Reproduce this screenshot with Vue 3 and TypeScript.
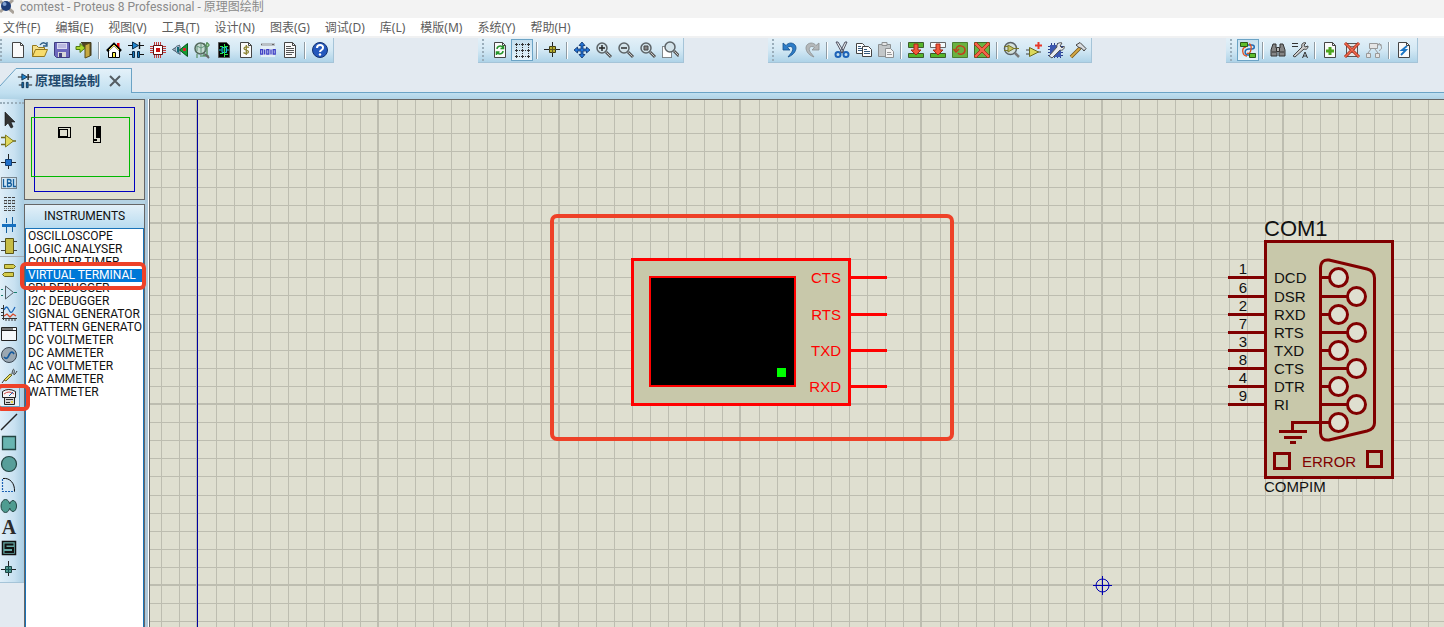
<script setup lang="ts">
import { ref } from 'vue'

interface Tool {
  icon: string
  label: string
}

const menus: string[] = [
  '文件(F)', '编辑(E)', '视图(V)', '工具(T)', '设计(N)', '图表(G)',
  '调试(D)', '库(L)', '模版(M)', '系统(Y)', '帮助(H)',
]

const page = '<path d="M3.500 1.500h8l3 3v12h-11z" fill="#fafafa" stroke="#454545"/><path d="M11.500 1.500v3h3" fill="none" stroke="#454545"/>'
const lens = '<circle cx="7" cy="7" r="5" fill="#d3e3ea" stroke="#5d6468" stroke-width="1.500"/><path d="M11 11l5 5" stroke="#555" stroke-width="3"/><path d="M11.500 11.500l4 4" stroke="#c8c8c8"/>'
const board = '<path d="M1.500 1.500h15v5h-15zM1.500 12.500h15v4h-15z" fill="#55b52b" stroke="#3c5c2c"/>'
const downArrow = '<path d="M7 3h4v6h3l-5 5-5-5h3z" fill="#f2593c" stroke="#a82814"/>'

const icons: Record<string, string> = {
  new: page,
  open: '<path d="M1.500 15.500v-11h4l2 2h6v3" fill="#f4e08a" stroke="#94771c"/><path d="M1.500 15.500l3-7h12l-3 7z" fill="#f7dc6c" stroke="#94771c"/><path d="M9 4c2-3 5-3 7 0m0-3v4h-4" fill="none" stroke="#2c5c84" stroke-width="1.300"/>',
  save: '<path d="M1.500 1.500h15v15h-13l-2-2z" fill="#6d69bd" stroke="#403d80"/><path d="M4 2h10v6h-10z" fill="#dadaf0"/><path d="M5 4h8M5 6h8" stroke="#9a98cf"/><path d="M5 11h8v5h-8z" fill="#d8d8d8"/><path d="M6 12h3v4h-3z" fill="#434080"/>',
  exit: '<path d="M6 1.500h10v13h-3" fill="#4e4424" stroke="#3f381f"/><path d="M10 4l5-2v13l-5 2z" fill="#c7a940" stroke="#594c1c"/><path d="M1 5.500h4v-3l5 4.500-5 4.500v-3h-4z" fill="#a9d82c" stroke="#4f7a12"/>',
  home: '<path d="M12 2h2.500v6h-2.500z" fill="#e00"/><path d="M4.500 9.500L9 5l5.500 4.500v7h-11z" fill="#fff"/><path d="M3.500 9v7.500h11V9" stroke="#000"/><path d="M2 10l7-7 7 7" fill="none" stroke="#000" stroke-width="2.500"/><path d="M4 9l5-5 5 5" fill="none" stroke="#fff04a"/><path d="M7.500 11.500h3v5h-3z" fill="#fff04a" stroke="#000"/>',
  schematic: '<path d="M1 4.500h5M12 4.500h5M2 13.500h4M13 13.500h4" stroke="#111"/><path d="M5.500 1v7l6-3.500z" fill="#1f86d0" stroke="#0c2c48"/><path d="M12.500 1v7" stroke="#111" stroke-width="1.400"/><path d="M5.500 10.500h2v6h-2zM10.500 10.500h2v6h-2z" fill="#1677b8" stroke="#0c2c48"/>',
  chip: '<path d="M5.500 1v16M7.500 1v16M9.500 1v16M11.500 1v16M1 5.500h16M1 7.500h16M1 9.500h16M1 11.500h16" stroke="#c23a3a"/><path d="M4.500 4.500h9v9h-9z" fill="#fff" stroke="#5c1010"/><path d="M7 7h4v4h-4z" fill="#c11"/>',
  view3d: '<path d="M1.500 8.500L9 4M1.500 8.500l8 5" fill="none" stroke="#456"/><path d="M4 8c0-3 4-4 5-3v8c-3-1-5-2-5-5z" fill="#b8cfe0" stroke="#567"/><path d="M6 6h2v6l-2-1z" fill="#146a78"/><path d="M16.500 2.500v13l-8-6.500z" fill="#159b32" stroke="#08541a"/><path d="M12 7h3v3h-3z" fill="#d8262c"/>',
  gerber: '<path d="M11 2v13M14 1v14M7 15h9" stroke="#428044" stroke-width="1.200"/><circle cx="7.500" cy="7.500" r="5.500" fill="#c7dbd3" stroke="#53695d" stroke-width="1.500"/><path d="M4 10V5l4 2 4-2v5M8 3v9" fill="none" stroke="#62947b"/><path d="M12 13l4 4" stroke="#666" stroke-width="2"/><circle cx="14.500" cy="4" r="1.600" fill="#9dd09e" stroke="#428044"/><path d="M4 13v4" stroke="#428044"/>',
  explorer: '<path d="M3.500 1.500h8l3 3v12h-11z" fill="#000" stroke="#555"/><path d="M5 5.500h3M5 12.500h3M9.500 3v3M9.500 12v4M10 5.500h3M10 13.500h3" stroke="#2ee04a"/><path d="M4 9h2.500M12 9h2" stroke="#17c8d8"/><path d="M7 6.500h4.500v5h-4.500z" fill="#083c3c" stroke="#17c8d8"/><path d="M9.500 6v6" stroke="#2ee04a"/>',
  bill: page + '<path d="M12 6.500c-1-1-5-1-5 1s4.500 1.200 4.500 3.200-4 2-5 .800M9.300 4v10" fill="none" stroke="#8c8433" stroke-width="1.300"/>',
  binary: '<path d="M2 2h14v14h-14z" fill="#e4eef6"/><path d="M2 2h14v3h-14z" fill="#b9c0c6"/><path d="M2 3.500h1M13 3.500h2" stroke="#666"/><path d="M1.700 8.700h2v4.500h-2zM5.700 13.500v-5M7.800 8.700h2v4.500h-2zM12 13.500v-5M14.200 8.700h2v4.500h-2z" fill="none" stroke="#3c3cc4" stroke-width="1.300"/>',
  notes: page + '<path d="M5 5.500h5M5 7.500h8M5 9.500h8M5 11.500h8M5 13.500h6" stroke="#555"/>',
  help: '<circle cx="9" cy="9" r="7.500" fill="#2459bd" stroke="#12316f"/><path d="M6 7c0-4 6.500-4 6 0 0 2-3 2-3 4" fill="none" stroke="#fff" stroke-width="2"/><circle cx="9" cy="13.500" r="1.200" fill="#fff"/>',
  refresh: page + '<path d="M6 8c0-3 4-4 6-1.500m.5-2v3h-3M12 10c0 3-4 4-6 1.500m-.5 2.500v-3h3" fill="none" stroke="#25952b" stroke-width="1.500"/>',
  grid: '<path d="M2 3.500h15M2 9.500h15M2 15.500h15M3.500 2v15M9.500 2v15M15.500 2v15" stroke="#333" stroke-dasharray="1 1"/><path d="M2 3.500h3M8 3.500h3M14 3.500h3M2 9.500h3M8 9.500h3M14 9.500h3M2 15.500h3M8 15.500h3M14 15.500h3" stroke="#333"/>',
  origin: '<path d="M1 8.500h16M9.500 1v15" stroke="#222"/><path d="M6.500 5.500h6v6h-6z" fill="#b9b030" stroke="#3f3c15"/><path d="M6 8.500h7M9.500 5v7" stroke="#5e5a20"/>',
  pan: '<path d="M9 1l3 3.500h-2v3.500h3.500v-2l3.500 3-3.500 3v-2h-3.500v3.500h2l-3 3.500-3-3.500h2v-3.500H4.500v2L1 9l3.500-3v2H8V4.500H6z" fill="#2476d9" stroke="#0c2e66" stroke-width=".8"/>',
  zoomIn: lens + '<path d="M4 7h6M7 4v6" stroke="#222" stroke-width="1.400"/>',
  zoomOut: lens + '<path d="M4 7h6" stroke="#222" stroke-width="1.400"/>',
  zoomAll: lens + '<path d="M5 5h4v4h-4z" fill="#888" stroke="#444"/>',
  zoomArea: '<path d="M1.500 5.500h9v11h-9z" fill="#fff" stroke="#222" stroke-dasharray="1 1"/><g transform="translate(2 -1)">' + lens + '</g>',
  undo: '<path d="M2 2v7h7L6.500 6.500c4-3 7 1 4 5L7 16c9-3 11-13 3-14-2 0-4 1-5 2.500z" fill="#2e7dc8" stroke="#17518c" stroke-width=".8"/>',
  redo: '<path d="M16 2v7H9l2.500-2.500c-4-3-7 1-4 5L11 16C2 13 0 3 8 2c2 0 4 1 5 2.500z" fill="#b4b8ba" stroke="#8c9092" stroke-width=".8"/>',
  cut: '<path d="M3 1l2 0 6 10-2 1zM14 1l-2 0-5 10 2 1z" fill="#e8eef0" stroke="#445" stroke-width=".9"/><circle cx="5" cy="13.500" r="2.500" fill="none" stroke="#1e63b8" stroke-width="2"/><circle cx="13" cy="13.500" r="2.500" fill="none" stroke="#1e63b8" stroke-width="2"/>',
  copy: '<path d="M1.500 2.500h6l2 2v8h-8z" fill="#fff" stroke="#444"/><path d="M7.500 5.500h6l3 3v7h-9z" fill="#fff" stroke="#444"/><path d="M3 5.500h3M3 7.500h4M3 9.500h4M9 8.500h3M9 10.500h6M9 12.500h6" stroke="#35597c"/>',
  paste: '<path d="M1.500 3.500h12v12h-12z" fill="#c3c7c9" stroke="#8c9092"/><path d="M5 1.500h5v3h-5z" fill="#e4e4e4" stroke="#8c9092"/><path d="M8.500 7.500h5l3 3v6h-8z" fill="#f5f5f5" stroke="#8c9092"/><path d="M10 11.500h4M10 13.500h5" stroke="#999"/>',
  blockCopy: board + downArrow,
  blockMove: '<path d="M1.500 1.500h15v5h-15z" fill="#f4fafc" stroke="#666"/><path d="M1.500 12.500h15v4h-15z" fill="#55b52b" stroke="#3c5c2c"/>' + downArrow,
  blockRotate: '<path d="M1.500 1.500h15v15h-15z" fill="#6ab241" stroke="#4b7d31"/><path d="M5 9c0-6 9-5 9 0s-6 5-7 3M2.500 8l2.500 3 3-3" fill="none" stroke="#c63a1c" stroke-width="1.500"/>',
  blockDelete: '<path d="M1.500 1.500h15v15h-15z" fill="#6ab241" stroke="#3f6a2b"/><path d="M3 1l6 6 6-6 2 2-6 6 6 6-2 2-6-6-6 6-2-2 6-6-6-6z" fill="#f2654a" stroke="#aa2c16" stroke-width=".9"/>',
  pick: '<circle cx="7.500" cy="7.500" r="6" fill="#d3e0dd" stroke="#5a6266" stroke-width="1.500"/><path d="M5 4v7l6-3.500z" fill="#c9c65c" stroke="#77752b"/><path d="M1 5.500h4M1 9.500h4M11 7.500h5" stroke="#77752b"/><path d="M12 12l4 4" stroke="#777" stroke-width="2.500"/>',
  make: '<path d="M1 9h4M1 13h4M13 11h3" stroke="#444"/><path d="M4.500 6.500v9l9-4.500z" fill="#dbd85a" stroke="#6b691d"/><path d="M13.500 1v7M10 4.500h7" stroke="#e8392a" stroke-width="2"/>',
  packaging: '<path d="M4.500 2v15M7.500 2v15M10.500 2v15M13.500 2v15M1 5.500h15M1 8.500h15M1 11.500h15M1 14.500h15" stroke="#2b3f8b"/><path d="M3 4h11v12h-11z" fill="#3c58b0"/><path d="M2 15l8-9c-1-3 2-5 5-4l-2 3 2 2 2-2c1 3-2 5-4 4l-8 8z" fill="#e8ecee" stroke="#555"/>',
  hammer: '<path d="M2 16l9-9" stroke="#76571a" stroke-width="3.500"/><path d="M2 16l9-9" stroke="#d6aa47" stroke-width="1.800"/><path d="M7 4l4-2.500 6 6-2 2.500-2-2.500-3-1z" fill="#d9dde0" stroke="#444"/>',
  wire: '<path d="M9 4h4c3 0 3 4 0 4h-3c-5 0-5 6-1 6h2" fill="none" stroke="#1f69b5" stroke-width="1.500"/><path d="M7 6c-5 0-4 9 1 9M10 3c4 0 2 12-2 9" fill="none" stroke="#e04a1c" stroke-width="1.300"/><path d="M1.500 1.500h7v4h-7zM10.500 12.500h6v4h-6z" fill="#5fbd2d" stroke="#2b5c17"/>',
  search: '<path d="M4 3h3v4l1 1v7h-6v-6zM11 3h3l2 6v6h-6v-7l1-1z" fill="#858585" stroke="#333"/><path d="M7.500 6.500h3v4h-3zM3 11h4M11 11h4" fill="#b9b9b9" stroke="#333"/>',
  property: '<path d="M1 2.500h6M1 5.500h6" stroke="#333"/><path d="M2 15l9-9c-1-3 1-5 4-4l-2 2 1 2 3-1c0 3-2 4-4 3l-9 8z" fill="#ccc" stroke="#444"/><path d="M11.500 17l2.500-6 2.500 6M12 15h4" fill="none" stroke="#333"/>',
  addSheet: page + '<path d="M9 6v8M5 10h8" stroke="#4ea51f" stroke-width="3"/>',
  removeSheet: '<path d="M3.500 2.500h11v13h-11z" fill="#e4e4e4" stroke="#555"/><path d="M6 5.500h6M6 8.500h6M6 11.500h6" stroke="#777"/><path d="M2 2l14 14M16 2L2 16" stroke="#a52c18" stroke-width="3"/><path d="M2 2l14 14M16 2L2 16" stroke="#f0694f" stroke-width="1.500"/>',
  parent: '<path d="M4.500 2.500h8v5h-8zM1.500 12.500h4v4h-4zM10.500 12.500h4v4h-4z" fill="#e5e5e5" stroke="#999"/><path d="M6 8l-3 4M10 8l3 4M13 3.500c4 0 5 5 1 6m3-5l-3-2-1 2" fill="none" stroke="#999"/>',
  erc: page + '<path d="M12 5l-5 4h4l-5 5" fill="none" stroke="#1a75c4" stroke-width="1.800"/>',
  select: '<path d="M5 1v14l3-3 3 5 2-1-2-5h4z" fill="#333" stroke="#111" stroke-width=".6"/>',
  component: '<path d="M1 5.500h5M1 12.500h5M12 9h4" stroke="#6b691d" stroke-width="1.300"/><path d="M5.500 3l8 6-8 6z" fill="#e0d95d" stroke="#837e23"/>',
  junction: '<path d="M1 9.500h15M8.500 1v15" stroke="#222"/><path d="M5.500 6.500h6v6h-6z" fill="#1f6fca" stroke="#123f75"/>',
  label: '<path d="M1.500 3.500h15v11h-15z" fill="none" stroke="#222" stroke-dasharray="1 1"/><path d="M3.500 5v7.500h2.500M7.500 5.500h1.500q2 0 2 1.700T9.500 9H8q3.500 0 3.500 1.700t-2 1.800H7.500zM13.500 5v7.500h2.500" fill="none" stroke="#155f9d" stroke-width="1.300"/>',
  script: '<path d="M4 2.500h11M4 5.500h11M4 8.500h11M4 11.500h11M4 15.500h11" stroke="#444" stroke-dasharray="3 1"/><path d="M4 7h11M4 13.500h11" stroke="#777" stroke-dasharray="1 1"/>',
  bus: '<path d="M6.500 8v9M12.500 1v15M6.500 2v5" stroke="#155f9d"/><path d="M2 9.500h14" stroke="#1770c0" stroke-width="3"/>',
  subcircuit: '<path d="M1 4.500h16M1 13.500h16" stroke="#444"/><path d="M5.500 1.500h8v15h-8z" fill="#c6bc45" stroke="#5a5518"/>',
  terminal: '<path d="M4.500 2.500h9l2 2-2 2h-9zM13.500 10.500h-9l-2 2 2 2h9z" fill="#d4cb4b" stroke="#6b661b"/>',
  pin: '<path d="M1 6.500h2M1 12.500h2M14 9.500h3" stroke="#178070"/><path d="M5.500 3l8 6.500-8 6.500z" fill="#cfe3f4" stroke="#566068"/>',
  graph: '<path d="M3.500 1v15M2 14.500h15M1 4.500h2M1 8.500h2M1 11.500h2M6 14v3M9 14v3M12 14v3M15 14v3" stroke="#333"/><path d="M4 6c2-4 3-4 5 0s3 3 6-3" fill="none" stroke="#2068b8" stroke-width="1.300"/><path d="M4 12l3-2 3 3 3-3 3 2" fill="none" stroke="#d4472a" stroke-width="1.300"/>',
  popup: '<path d="M1.500 2.500h15v13h-15z" fill="#f6f9fb" stroke="#222"/><path d="M2 3h11v2h-11z" fill="#777"/><path d="M2 5.500h14" stroke="#222"/>',
  generator: '<circle cx="9" cy="9" r="7.500" fill="#9aa7b2" stroke="#3a4651"/><path d="M4 11c3 3 4 0 5-2s3-5 5-1" fill="none" stroke="#165a9c" stroke-width="1.700"/>',
  probe: '<path d="M2 16l3-4" stroke="#333"/><path d="M4 13l6-6 2 1-6 6z" fill="#e2d964" stroke="#67621c"/><path d="M12 7c1-8 3-4 2-1s1 2 3-2" fill="none" stroke="#333"/>',
  instrument: '<path d="M2.500 9.500v-6q6-4 13 0v6z" fill="#f5f5f5" stroke="#222"/><path d="M4 6q5-4 10 0" fill="none" stroke="#c44"/><path d="M9 8l4-4" stroke="#1464b4"/><path d="M4.500 9.500h10v7h-10z" fill="#d7d7d7" stroke="#222"/><path d="M6 11.500h7M6 14.500h4" stroke="#333"/><path d="M11 13h2v2h-2z" fill="#e6d945"/>',
  line: '<path d="M1 17L17 1" stroke="#222" stroke-width="1.400"/>',
  box: '<path d="M2.500 2.500h13v13h-13z" fill="#68b5b1" stroke="#234442" stroke-width="1.300"/>',
  circle: '<circle cx="9" cy="9" r="7.500" fill="#579e9a" stroke="#234442" stroke-width="1.200"/>',
  arc: '<path d="M2.500 3v12.500h12" fill="none" stroke="#1d62b5" stroke-width="1.200" stroke-dasharray="2 1"/><path d="M3 2.500c7-1 12 5 11.500 13" fill="none" stroke="#111"/>',
  path: '<ellipse cx="5.500" cy="9" rx="4.500" ry="6.500" fill="#4f9c91" stroke="#234442"/><ellipse cx="13" cy="9" rx="3.500" ry="5.500" fill="#4f9c91" stroke="#234442"/><path d="M8 7h3v4h-3z" fill="#4f9c91"/>',
  symbol: '<path d="M2.500 2.500h13v13h-13z" fill="#65aaa6" stroke="#111" stroke-width="1.500"/><path d="M13.500 5.500h-8v3.500h7.500v4h-8.500" fill="none" stroke="#111" stroke-width="2"/>',
  marker: '<path d="M1 9.500h15M8.500 1v15" stroke="#222"/><path d="M5.500 6.500h6v6h-6z" fill="#4f9c91" stroke="#1f4745"/><path d="M8.500 6v7M5 9.500h7" stroke="#164f52"/>',
}

const t = (icon: string, label: string): Tool => ({ icon, label })

const toolbars: { name: string; groups: Tool[][] }[] = [
  {
    name: 'file',
    groups: [
      [t('new', '新建'), t('open', '打开'), t('save', '保存'), t('exit', '关闭')],
      [
        t('home', '主页'), t('schematic', '原理图'), t('chip', 'PCB'), t('view3d', '3D'), t('gerber', 'Gerber'),
        t('explorer', '设计浏览器'), t('bill', '材料清单'), t('binary', '源代码'), t('notes', '工程备注'),
      ],
      [t('help', '帮助')],
    ],
  },
  {
    name: 'view',
    groups: [
      [t('refresh', '刷新'), t('grid', '网格')],
      [t('origin', '原点')],
      [t('pan', '平移'), t('zoomIn', '放大'), t('zoomOut', '缩小'), t('zoomAll', '全部'), t('zoomArea', '区域')],
    ],
  },
  {
    name: 'edit',
    groups: [
      [t('undo', '撤销'), t('redo', '重做')],
      [t('cut', '剪切'), t('copy', '复制'), t('paste', '粘贴')],
      [t('blockCopy', '块复制'), t('blockMove', '块移动'), t('blockRotate', '块旋转'), t('blockDelete', '块删除')],
      [t('pick', '选取元件'), t('make', '制作元件'), t('packaging', '封装'), t('hammer', '分解')],
    ],
  },
  {
    name: 'design',
    groups: [
      [t('wire', '自动布线')],
      [t('search', '查找'), t('property', '属性分配')],
      [t('addSheet', '新建图纸'), t('removeSheet', '删除图纸'), t('parent', '父图纸')],
      [t('erc', '电气规则检查')],
    ],
  },
]

const pressed = new Set(['grid', 'wire', 'instrument'])

const modes: Tool[][] = [
  [
    t('select', '选择'), t('component', '元件'), t('junction', '节点'), t('label', '标签'),
    t('script', '脚本'), t('bus', '总线'), t('subcircuit', '子电路'),
  ],
  [
    t('terminal', '终端'), t('pin', '引脚'), t('graph', '图表'), t('popup', '弹出'),
    t('generator', '激励源'), t('probe', '探针'), t('instrument', '仪器'),
  ],
  [
    t('line', '直线'), t('box', '方框'), t('circle', '圆'), t('arc', '圆弧'),
    t('path', '路径'), t('text', '文本'), t('symbol', '符号'), t('marker', '标记'),
  ],
]

const instruments: string[] = [
  'OSCILLOSCOPE', 'LOGIC ANALYSER', 'COUNTER TIMER', 'VIRTUAL TERMINAL', 'SPI DEBUGGER',
  'I2C DEBUGGER', 'SIGNAL GENERATOR', 'PATTERN GENERATO', 'DC VOLTMETER', 'DC AMMETER',
  'AC VOLTMETER', 'AC AMMETER', 'WATTMETER',
]
const selected = ref('VIRTUAL TERMINAL')

// Grid: one line per 18.1 px, every tenth line is heavy.
const gridLines = (start: number, count: number) =>
  Array.from({ length: count }, (_, i) => {
    const heavy = i % 10 === 0
    const at = Math.floor(start + i * 18.1)
    return { at: heavy ? at - 1 : at, size: heavy ? 2 : 1 }
  })
const columns = gridLines(47.9, 180).concat([{ at: 11, size: 1 }, { at: 29, size: 1 }])
const rows = gridLines(-57.5, 120)

const terminalPins = [
  { name: 'CTS', y: 277 }, { name: 'RTS', y: 314 }, { name: 'TXD', y: 350 }, { name: 'RXD', y: 386 },
]
const comPins = [
  { no: 1, name: 'DCD', y: 277 }, { no: 6, name: 'DSR', y: 296 }, { no: 2, name: 'RXD', y: 314 },
  { no: 7, name: 'RTS', y: 332 }, { no: 3, name: 'TXD', y: 350 }, { no: 8, name: 'CTS', y: 368 },
  { no: 4, name: 'DTR', y: 386 }, { no: 9, name: 'RI', y: 404 },
]
</script>

<template>
  <div class="window">
    <header class="title">
      <svg class="logo" viewBox="0 0 14 14" aria-hidden="true">
        <path d="M0 1l14 12M0 12L13 0" stroke="#a9a29a" stroke-width="3" />
        <circle cx="6" cy="6" r="5" fill="#1d3c78" />
        <circle cx="4.500" cy="4" r="2" fill="#7f9fd0" />
      </svg>
      <span>comtest - Proteus 8 Professional - 原理图绘制</span>
    </header>

    <nav class="menu">
      <button v-for="m in menus" :key="m" type="button">{{ m }}</button>
    </nav>

    <div class="bars">
      <div v-for="bar in toolbars" :key="bar.name" class="bar" :class="bar.name" role="toolbar">
        <div v-for="(group, gi) in bar.groups" :key="gi" class="group">
          <button
            v-for="tool in group"
            :key="tool.icon"
            type="button"
            :aria-label="tool.label"
            :class="{ pressed: pressed.has(tool.icon) }"
          >
            <svg viewBox="0 0 18 18" fill="none" v-html="icons[tool.icon]"></svg>
          </button>
        </div>
      </div>
    </div>

    <div class="tabs">
      <svg class="slant" viewBox="0 0 17 25" aria-hidden="true">
        <defs>
          <linearGradient id="tabFill" x1="0" y1="0" x2="0" y2="1">
            <stop offset="0" stop-color="#e4f1f9" />
            <stop offset="1" stop-color="#c0dff0" />
          </linearGradient>
        </defs>
        <path d="M0 18L16 .5H17V25H0z" fill="url(#tabFill)" />
        <path d="M0 18L16 .5H17" fill="none" stroke="#6ba3c5" />
      </svg>
      <div class="tab">
        <svg class="tab-icon" viewBox="0 0 18 18" fill="none" aria-hidden="true" v-html="icons.schematic"></svg>
        <span>原理图绘制</span>
        <button type="button" aria-label="关闭标签">
          <svg viewBox="0 0 12 12"><path d="M1 1l10 10M11 1L1 11" stroke="#555d62" stroke-width="2" /></svg>
        </button>
      </div>
    </div>
    <div class="strip"></div>

    <main class="work">
      <div class="side">
        <div class="modes" role="toolbar" aria-orientation="vertical">
          <div v-for="(group, gi) in modes" :key="gi" class="mode-group">
            <button
              v-for="tool in group"
              :key="tool.icon"
              type="button"
              :aria-label="tool.label"
              :class="{ pressed: pressed.has(tool.icon) }"
            >
              <span v-if="tool.icon === 'text'" class="letter">A</span>
              <svg v-else viewBox="0 0 18 18" fill="none" v-html="icons[tool.icon]"></svg>
              <span v-if="tool.icon === 'instrument'" class="mark mark-tool"></span>
            </button>
          </div>
        </div>
      </div>

      <aside class="panel">
        <div class="preview">
          <svg viewBox="0 0 119 99" fill="none" shape-rendering="crispEdges">
            <path d="M9.500 7.500h100v84h-100z" stroke="#0000c0" />
            <path d="M6.500 17.500h98v59h-98z" stroke="#00b800" />
            <path d="M33.500 27.500h12v10h-12zM34.500 29.500h8v7h-8z" stroke="#000" />
            <path d="M68.500 26.500h7v16h-7z" fill="#dfdfd0" stroke="#000" />
            <path d="M71 27h4v11h-4zM69 39h3v2h-3z" fill="#000" />
          </svg>
        </div>
        <section class="devices">
          <h2>INSTRUMENTS</h2>
          <ul>
            <li v-for="name in instruments" :key="name" :class="{ selected: name === selected }">
              <button type="button" @click="selected = name">{{ name }}</button>
              <span v-if="name === 'VIRTUAL TERMINAL'" class="mark mark-row"></span>
            </li>
          </ul>
        </section>
      </aside>

      <section class="sheet">
        <svg class="drawing" fill="none">
          <g fill="#bdbdb0" shape-rendering="crispEdges">
            <rect v-for="c in columns" :key="'c' + c.at" :x="c.at" y="0" :width="c.size" height="100%" />
            <rect v-for="r in rows" :key="'r' + r.at" x="0" :y="r.at" width="100%" :height="r.size" />
          </g>
          <rect x="47" y="0" width="1" height="100%" fill="#0000a0" />

          <g transform="translate(-150 -100)">
            <g stroke="#f00" stroke-width="3">
              <rect x="632.500" y="259.500" width="217" height="145" fill="#c8c8aa" />
              <rect x="650" y="277" width="145" height="109" fill="#000" stroke-width="2" />
              <path v-for="p in terminalPins" :key="p.name" :d="`M850 ${p.y + 0.5}h37`" />
            </g>
            <rect x="777" y="368" width="9" height="9" fill="#0f0" />
            <g class="pin-text" fill="#f00" text-anchor="end">
              <text v-for="p in terminalPins" :key="p.name" x="841" :y="p.y + 6">{{ p.name }}</text>
            </g>

            <g stroke="#800000" stroke-width="3">
              <rect x="1265.500" y="241.500" width="127" height="236" fill="#c8c8aa" />
              <path d="M1320.500 268Q1321 259 1329 260L1367 269Q1374.500 271 1374.500 278V423Q1374.500 429 1367 431L1329 440Q1321 441 1320.500 433z" />
              <path v-for="p in comPins" :key="p.no" :d="`M1228 ${p.y + 0.5}h37`" />
              <path v-for="(p, i) in comPins" :key="'w' + p.no" :d="`M1320 ${p.y + 0.5}h${i % 2 ? 27 : 9}`" />
              <circle
                v-for="(p, i) in comPins"
                :key="'s' + p.no"
                :cx="i % 2 ? 1356.5 : 1338.5"
                :cy="p.y + 0.5"
                r="9"
                fill="#dfdfd0"
              />
              <path d="M1329 422.500H1292.500V431M1279 431.500h28M1284 437.500h18M1290 442.500h6" />
              <circle cx="1338.500" cy="422.500" r="9" fill="#dfdfd0" />
              <path d="M1274.500 453.500h15v15h-15zM1367.500 451.500h14v15h-14z" />
            </g>
            <g class="pin-text" fill="#111">
              <text v-for="p in comPins" :key="p.no" x="1274" :y="p.y + 6">{{ p.name }}</text>
              <text x="1264" y="492">COMPIM</text>
              <text x="1302" y="467" fill="#800000">ERROR</text>
              <text class="ref" x="1264" y="236">COM1</text>
            </g>
            <g class="pin-text" fill="#111" text-anchor="middle">
              <text v-for="p in comPins" :key="p.no" x="1243" :y="p.y - 3">{{ p.no }}</text>
            </g>

            <g stroke="#0000b0">
              <circle cx="1102.500" cy="585.500" r="6.500" />
              <path d="M1093 585.500h19M1102.500 576v19" />
            </g>
            <rect x="552" y="216" width="400" height="223" rx="5" stroke="#ee4128" stroke-width="4" />
          </g>
        </svg>
      </section>
    </main>
  </div>
</template>

<style>
body {
  margin: 0;
}
</style>

<style scoped>
.window {
  display: flex;
  flex-direction: column;
  min-height: 100vh;
  background: #e3eaf1;
  font-family: 'Noto Sans', 'Noto Sans CJK SC', sans-serif;
  font-size: 12px;
  overflow: hidden;
}
button {
  margin: 0;
  padding: 0;
  border: 0;
  background: none;
  color: inherit;
  font: inherit;
}
svg {
  display: block;
}
.title {
  display: flex;
  align-items: flex-start;
  gap: 6px;
  height: 18px;
  background: #f3f3f3;
  color: #8a8a8a;
  font-family: Roboto, 'Noto Sans CJK SC', sans-serif;
}
.title span {
  line-height: 14px;
}
.logo {
  width: 14px;
  height: 14px;
}
.menu {
  display: flex;
  gap: 15px;
  height: 18px;
  padding-left: 3px;
  background: #fff;
  border-bottom: 2px solid #f0f1f2;
  color: #5c5c5c;
}
.menu button {
  line-height: 20px;
  white-space: nowrap;
}
.bars {
  display: flex;
  height: 25px;
}
.bar {
  display: flex;
  flex: none;
  position: relative;
  box-sizing: border-box;
  height: 25px;
  padding: 0 2px 0 11px;
  border-right: 1px solid #a5c4d8;
  border-bottom: 1px solid #a5c4d8;
  background: linear-gradient(#e3f0f8, #d3e8f4 50%, #aed3e8);
}
.bar::before {
  content: '';
  position: absolute;
  left: 4px;
  top: 1px;
  bottom: 1px;
  border-left: 2px dotted #9aaebb;
}
.file {
  margin-left: -4px;
}
.view {
  margin-left: 144px;
}
.edit {
  margin-left: 84px;
}
.design {
  margin-left: 134px;
}
.group {
  display: flex;
  align-items: center;
}
.group + .group::before {
  content: '';
  width: 1px;
  height: 17px;
  margin: 0 3px;
  background: #8f9ba3;
  border-right: 1px solid #fff;
  box-sizing: content-box;
}
.group button {
  display: grid;
  place-items: center;
  box-sizing: border-box;
  width: 22px;
  height: 22px;
}
.group svg,
.modes svg {
  width: 18px;
  height: 18px;
}
button.pressed {
  border: 1px solid #6ba3c5;
  background: linear-gradient(#c5dfee, #e6f3fa);
}
.tabs {
  display: flex;
  height: 25px;
  margin-top: 5px;
  position: relative;
}
.slant {
  width: 17px;
  height: 25px;
}
.tab {
  display: flex;
  align-items: center;
  box-sizing: border-box;
  padding: 0 10px 0 0;
  border-top: 1px solid #6ba3c5;
  border-right: 1px solid #6ba3c5;
  background: linear-gradient(#e4f1f9, #c0dff0);
  color: #1f4a6d;
  font-size: 13px;
  font-weight: 700;
  line-height: 20px;
  white-space: nowrap;
}
.tab span {
  padding-bottom: 3px;
}
.tab-icon {
  width: 16px;
  height: 16px;
  margin-right: 2px;
}
.tab button {
  margin-left: 9px;
}
.tab button svg {
  width: 12px;
  height: 12px;
}
.tabs::after {
  content: '';
  flex: 1;
  border-bottom: 1px solid #6ba3c5;
}
.strip {
  height: 6px;
  background: linear-gradient(#c0dff0, #b0d3e6);
}
.work {
  display: grid;
  grid-template-columns: 24px 121px minmax(0, 1fr);
  flex: 1;
}
.modes {
  box-sizing: border-box;
  padding: 10px 0 3px;
  border-bottom: 1px solid #a5c4d8;
  background: linear-gradient(90deg, #dfeef8, #c8e1f1 60%, #a9cde2);
  position: relative;
}
.modes::before {
  content: '';
  position: absolute;
  left: 0;
  right: 0;
  top: 3px;
  border-top: 2px dotted #9aaebb;
}
.mode-group + .mode-group {
  padding-top: 4px;
}
.mode-group:nth-child(2) {
  box-shadow: inset 0 1px #a4adb3;
}
.modes button {
  display: grid;
  place-items: center;
  position: relative;
  box-sizing: border-box;
  width: 22px;
  height: 21px;
  margin-left: -2px;
}
.letter {
  color: #2c2c2c;
  font: 700 20px/20px 'Liberation Serif', serif;
}
.mark {
  position: absolute;
  z-index: 2;
  border: 4px solid #ee4128;
  border-radius: 6px;
  pointer-events: none;
}
.mark-tool {
  inset: -3px -11px -5px -3px;
}
.mark-row {
  inset: -7px -3px -8px -6px;
}
.panel {
  display: flex;
  flex-direction: column;
  gap: 4px;
  background: #b5d3e4;
}
.preview {
  border: 1px solid #666;
  background: #dfdfd0;
}
.preview svg {
  width: 119px;
  height: 99px;
}
.devices {
  flex: 1;
  display: flex;
  flex-direction: column;
  border: 1px solid #666;
  border-bottom: 0;
  font: 12px/13px Roboto, 'Liberation Sans', sans-serif;
  color: #111;
}
.devices h2 {
  margin: 0;
  background: linear-gradient(#e3f0f8, #b9dcf0);
  font-size: 12px;
  font-weight: 400;
  line-height: 23px;
  text-align: center;
}
.devices ul {
  flex: 1;
  margin: 0;
  padding: 1px 0 0;
  list-style: none;
  border: 1px solid #1a73b8;
  border-bottom: 0;
  background: #fff;
}
.devices li {
  position: relative;
  height: 13px;
}
.devices li button {
  display: block;
  width: 100%;
  padding-left: 2px;
  text-align: left;
  white-space: nowrap;
}
.devices li.selected {
  background: #0078d7;
  color: #fff;
}
.sheet {
  position: relative;
  margin-left: 4px;
  border-left: 1px solid #666;
  border-top: 1px solid #666;
  background: #dfdfd0;
  box-shadow: -1px 0 #fff, -4px 0 #adc8da;
}
.drawing {
  position: absolute;
  width: 100%;
  height: 100%;
}
.pin-text {
  font: 15px 'Liberation Sans', sans-serif;
}
.ref {
  font-size: 22px;
}
</style>
